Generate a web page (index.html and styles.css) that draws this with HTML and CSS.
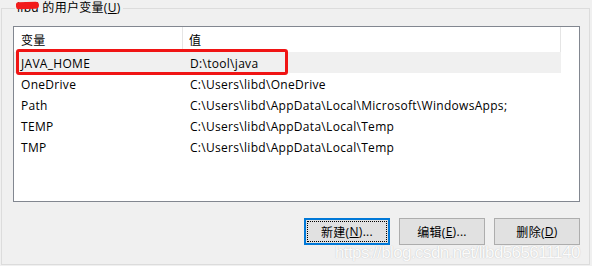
FILE: index.html
```html
<!DOCTYPE html>
<html>
<head>
<meta charset="utf-8">
<link rel="stylesheet" href="styles.css">
</head>
<body>
<fieldset class="group">
  <legend class="title"><span class="user">libd<span class="scribble"></span></span> 的用户变量(<u>U</u>)</legend>
  <div class="list">
    <div class="head">
      <div class="col c1">变量</div>
      <div class="col c2">值</div>
    </div>
    <div class="row sel">
      <div class="c1">JAVA_HOME</div>
      <div class="c2">D:\tool\java</div>
    </div>
    <div class="row">
      <div class="c1">OneDrive</div>
      <div class="c2">C:\Users\libd\OneDrive</div>
    </div>
    <div class="row">
      <div class="c1">Path</div>
      <div class="c2">C:\Users\libd\AppData\Local\Microsoft\WindowsApps;</div>
    </div>
    <div class="row">
      <div class="c1">TEMP</div>
      <div class="c2">C:\Users\libd\AppData\Local\Temp</div>
    </div>
    <div class="row">
      <div class="c1">TMP</div>
      <div class="c2">C:\Users\libd\AppData\Local\Temp</div>
    </div>
    <div class="mark"></div>
  </div>
  <div class="buttons">
    <button class="btn focus"><span class="inner">新建(<u>N</u>)...</span></button>
    <button class="btn"><span class="inner">编辑(<u>E</u>)...</span></button>
    <button class="btn"><span class="inner">删除(<u>D</u>)</span></button>
  </div>
  <div class="watermark">https://blog.csdn.net/libd565611140</div>
</fieldset>
</body>
</html>
```
FILE: styles.css
```css
* { box-sizing: border-box; }
html, body {
  margin: 0;
  padding: 0;
  width: 592px;
  height: 266px;
  background: #f0f0f0;
  overflow: hidden;
  font-family: "Open Sans", "Noto Sans CJK SC", sans-serif;
  font-size: 12px;
  color: #000;
}
.group {
  position: relative;
  margin: 0 0 0 1px;
  width: 589px;
  height: 265px;
  border: 1px solid #dcdcdc;
  padding: 10px 9px 0 11px;
}
.title {
  padding: 0 2px 0 2px;
  margin-left: 2px;
  line-height: 16px;
  font-size: 12px;
  letter-spacing: 0.3px;
}
.user { position: relative; }
.scribble {
  position: absolute;
  left: -1px;
  top: 3px;
  width: 23px;
  height: 7px;
  background: #f21b1b;
  border-radius: 3px 4px 4px 3px;
  transform: rotate(-2deg);
}
.list {
  position: relative;
  width: 567px;
  height: 176px;
  background: #fff;
  border: 1px solid #828790;
  letter-spacing: 0.3px;
}
.head {
  display: flex;
  height: 25px;
  align-items: stretch;
}
.head .col {
  display: flex;
  align-items: center;
  padding-top: 1px;
}
.head .c1 {
  width: 169px;
  padding-left: 7px;
  border-right: 1px solid #e5e5e5;
}
.head .c2 {
  width: 378px;
  padding-left: 6px;
  border-right: 1px solid #e5e5e5;
}
.row {
  display: flex;
  height: 21px;
  align-items: center;
  width: 547px;
  padding-top: 2px;
}
.row .c1 { width: 169px; padding-left: 7px; }
.row .c2 { padding-left: 7px; white-space: nowrap; }
.sel { background: #f0f0f0; }
.mark {
  position: absolute;
  left: 2px;
  top: 22px;
  width: 272px;
  height: 26px;
  border: 3px solid #f01414;
  border-radius: 3px;
}
.buttons {
  display: flex;
  justify-content: flex-end;
  gap: 9px;
  margin-top: 16px;
  width: 567px;
}
.btn {
  width: 86px;
  height: 27px;
  background: #e1e1e1;
  border: 1px solid #adadad;
  font-family: inherit;
  font-size: 12px;
  letter-spacing: 0.3px;
  padding: 2px;
  margin: 0;
  color: #000;
}
.btn .inner {
  display: flex;
  align-items: center;
  justify-content: center;
  width: 100%;
  height: 100%;
  border: 1px dotted transparent;
}
.btn.focus {
  border: 2px solid #0078d7;
  padding: 1px;
}
.btn.focus .inner { border-color: #000; }
.watermark {
  position: absolute;
  left: 333px;
  top: 227px;
  font-family: "Liberation Sans", sans-serif;
  font-size: 17px;
  line-height: 19px;
  letter-spacing: -0.6px;
  color: rgba(255, 255, 255, 0.95);
  text-shadow: 0 0 1px rgba(170, 170, 170, 0.8);
  white-space: nowrap;
}
```
